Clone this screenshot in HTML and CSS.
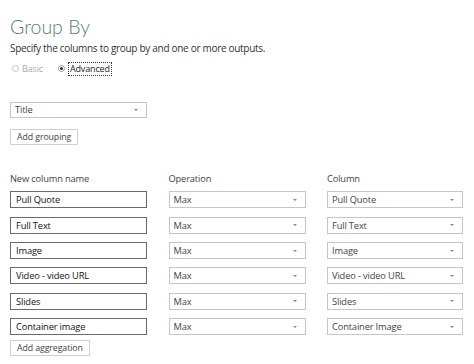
FILE: index.html
```html
<!DOCTYPE html>
<html lang="en">

<head>
    <meta charset="UTF-8">
    <meta name="viewport" content="width=device-width, initial-scale=1.0">
    <title>Group By</title>
    <link rel="stylesheet" href="styles.css">
</head>

<body>
    <div class="dialog">
        <h1 class="title">Group By</h1>
        <p class="desc">Specify the columns to group by and one or more outputs.</p>

        <div class="modes">
            <label class="mode disabled"><span class="radio"></span>Basic</label>
            <label class="mode"><span class="radio checked"></span><span class="focus">Advanced</span></label>
        </div>

        <div class="select group-select">
            <span>Title</span>
            <span class="arrow"></span>
        </div>
        <button class="btn">Add grouping</button>

        <div class="grid">
            <div class="head">New column name</div>
            <div class="head">Operation</div>
            <div class="head">Column</div>

            <div class="input">Pull Quote</div>
            <div class="select"><span>Max</span><span class="arrow"></span></div>
            <div class="select"><span>Pull Quote</span><span class="arrow"></span></div>

            <div class="input">Full Text</div>
            <div class="select"><span>Max</span><span class="arrow"></span></div>
            <div class="select"><span>Full Text</span><span class="arrow"></span></div>

            <div class="input">Image</div>
            <div class="select"><span>Max</span><span class="arrow"></span></div>
            <div class="select"><span>Image</span><span class="arrow"></span></div>

            <div class="input">Video - video URL</div>
            <div class="select"><span>Max</span><span class="arrow"></span></div>
            <div class="select"><span>Video - video URL</span><span class="arrow"></span></div>

            <div class="input">Slides</div>
            <div class="select"><span>Max</span><span class="arrow"></span></div>
            <div class="select"><span>Slides</span><span class="arrow"></span></div>

            <div class="input">Container image</div>
            <div class="select"><span>Max</span><span class="arrow"></span></div>
            <div class="select"><span>Container Image</span><span class="arrow"></span></div>
        </div>

        <button class="btn agg">Add aggregation</button>
    </div>
</body>

</html>
```

FILE: styles.css
```css
* {
    margin: 0;
    padding: 0;
    box-sizing: border-box;
}

body {
    background: #fff;
    font-family: "Open Sans", "Noto Sans", sans-serif;
    font-size: 9.3px;
    letter-spacing: -0.15px;
    color: #333;
}

.dialog {
    padding: 15px 10px 0 10px;
}

.title {
    font-family: Lato, "Open Sans", sans-serif;
    font-size: 19.5px;
    font-weight: 300;
    letter-spacing: 0;
    color: #557f66;
    line-height: 24px;
}

.desc {
    font-size: 10px;
    letter-spacing: -0.3px;
    color: #333;
    margin-top: 2px;
    line-height: 14px;
}

.modes {
    display: flex;
    align-items: center;
    gap: 15px;
    margin-top: 5.5px;
    height: 16px;
    font-size: 9px;
}

.mode {
    display: flex;
    align-items: center;
    gap: 3px;
    color: #222;
}

.mode.disabled {
    color: #aaa;
    margin-left: 2px;
}

.radio {
    width: 7px;
    height: 7px;
    border: 1px solid #999;
    border-radius: 50%;
    display: inline-block;
    position: relative;
}

.mode.disabled .radio {
    border-color: #c8c8c8;
}

.radio.checked::after {
    content: "";
    position: absolute;
    left: 1px;
    top: 1px;
    width: 3px;
    height: 3px;
    border-radius: 50%;
    background: #333;
}

.focus {
    border: 1px dotted #333;
    padding: 0 1px;
    line-height: 12px;
}

.select,
.input {
    height: 17px;
    display: flex;
    align-items: center;
    justify-content: space-between;
    padding: 0 8px 0 4px;
    color: #444;
    border: 1px solid #c6c6c6;
    background: #fff;
}

.input {
    border-color: #6a6a6a;
    color: #111;
    padding-left: 5px;
}

.arrow {
    width: 0;
    height: 0;
    border-left: 2px solid transparent;
    border-right: 2px solid transparent;
    border-top: 2.5px solid #888;
}

.group-select {
    width: 137px;
    height: 16px;
    margin-top: 25px;
}

.btn {
    display: block;
    font-family: inherit;
    font-size: 8.8px;
    letter-spacing: -0.1px;
    color: #444;
    background: #fff;
    border: 1px solid #d0d0d0;
    height: 16px;
    padding: 0 6px;
    margin-top: 11px;
}

.grid {
    display: grid;
    grid-template-columns: 137px 137px 136px;
    column-gap: 21.5px;
    row-gap: 8.4px;
    margin-top: 27.5px;
}

.head {
    color: #444;
    line-height: 14px;
    margin-bottom: -3.1px;
}

.agg {
    margin-top: 5px;
}
```
